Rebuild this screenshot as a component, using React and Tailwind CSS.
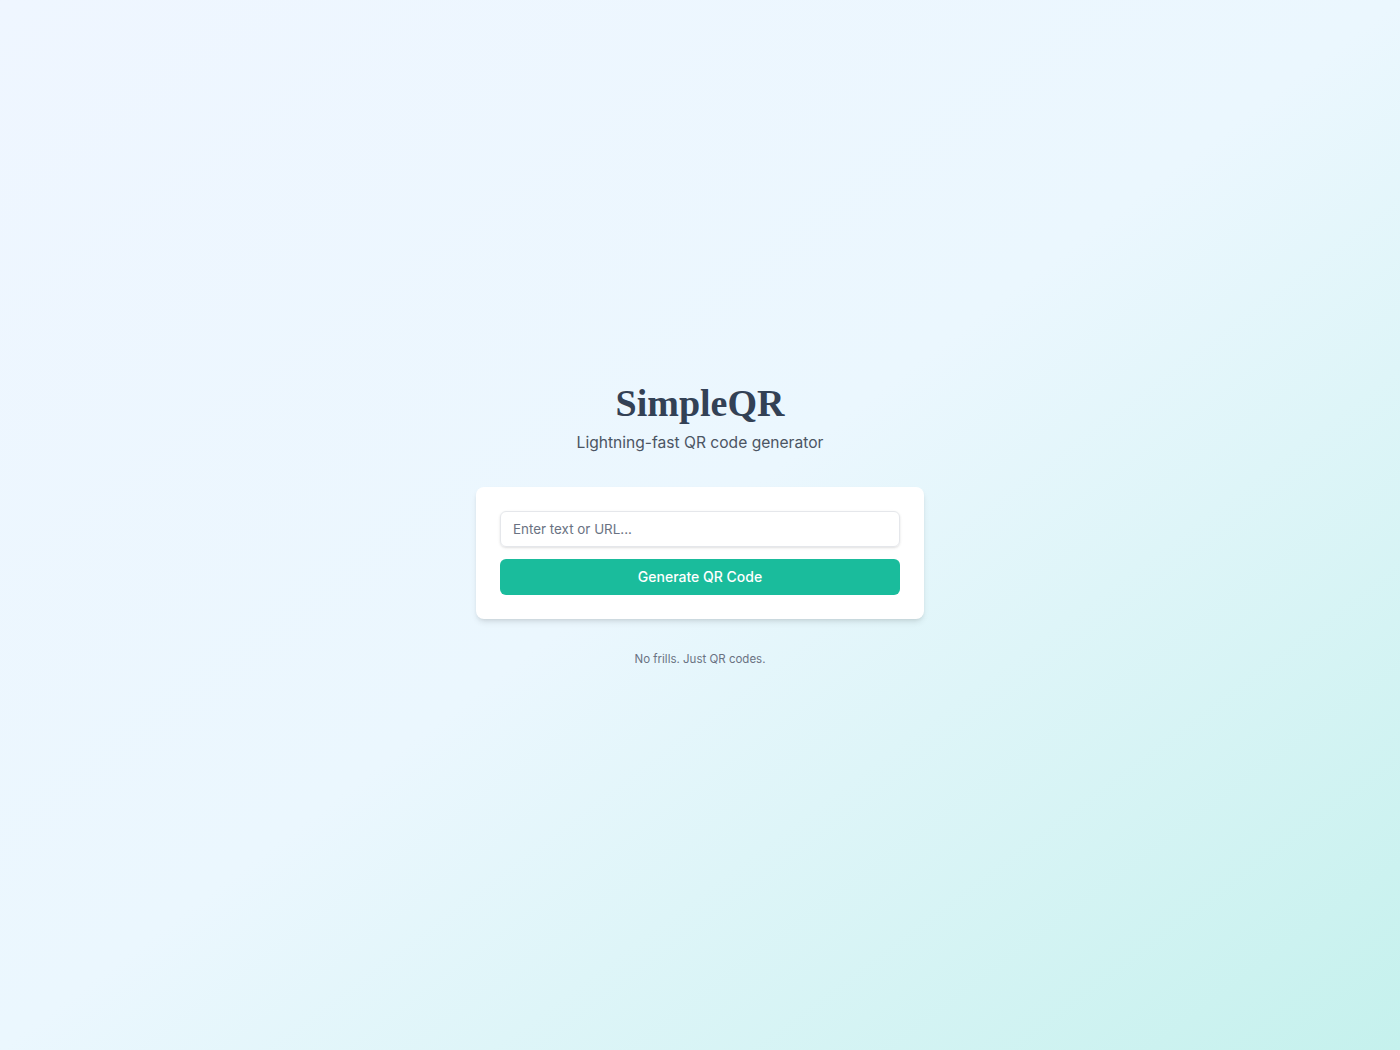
import React, { useState } from 'react';

export default function App() {
  const [text, setText] = useState('');

  return (
    <div
      className="min-h-screen flex flex-col items-center justify-center bg-gradient-to-br from-[#eff6ff] via-[#ebf7fe] to-[#c5f1ed] px-4"
      style={{ fontFamily: 'Inter, "Noto Sans", sans-serif' }}
    >
      <div className="text-center mb-8">
        <h1
          className="text-[38px] leading-10 font-bold text-[#334155] mb-2"
          style={{ fontFamily: '"Liberation Serif", "DejaVu Serif", serif' }}
        >
          SimpleQR
        </h1>
        <p className="text-[15.6px] leading-6 text-[#4b5563]">Lightning-fast QR code generator</p>
      </div>

      <div className="w-full max-w-md bg-white rounded-lg shadow-md p-6">
        <div className="flex flex-col gap-3">
          <input
            type="text"
            value={text}
            onChange={(e) => setText(e.target.value)}
            placeholder="Enter text or URL..."
            className="w-full h-9 px-3 text-[13.4px] text-gray-700 placeholder:text-gray-500 border border-gray-200 rounded-md shadow-sm outline-none"
          />
          <button className="w-full h-9 rounded-md bg-[#1abc9c] text-white text-sm font-medium">
            Generate QR Code
          </button>
        </div>
      </div>

      <p className="mt-8 text-[11.5px] leading-4 text-gray-500">No frills. Just QR codes.</p>
    </div>
  );
}
